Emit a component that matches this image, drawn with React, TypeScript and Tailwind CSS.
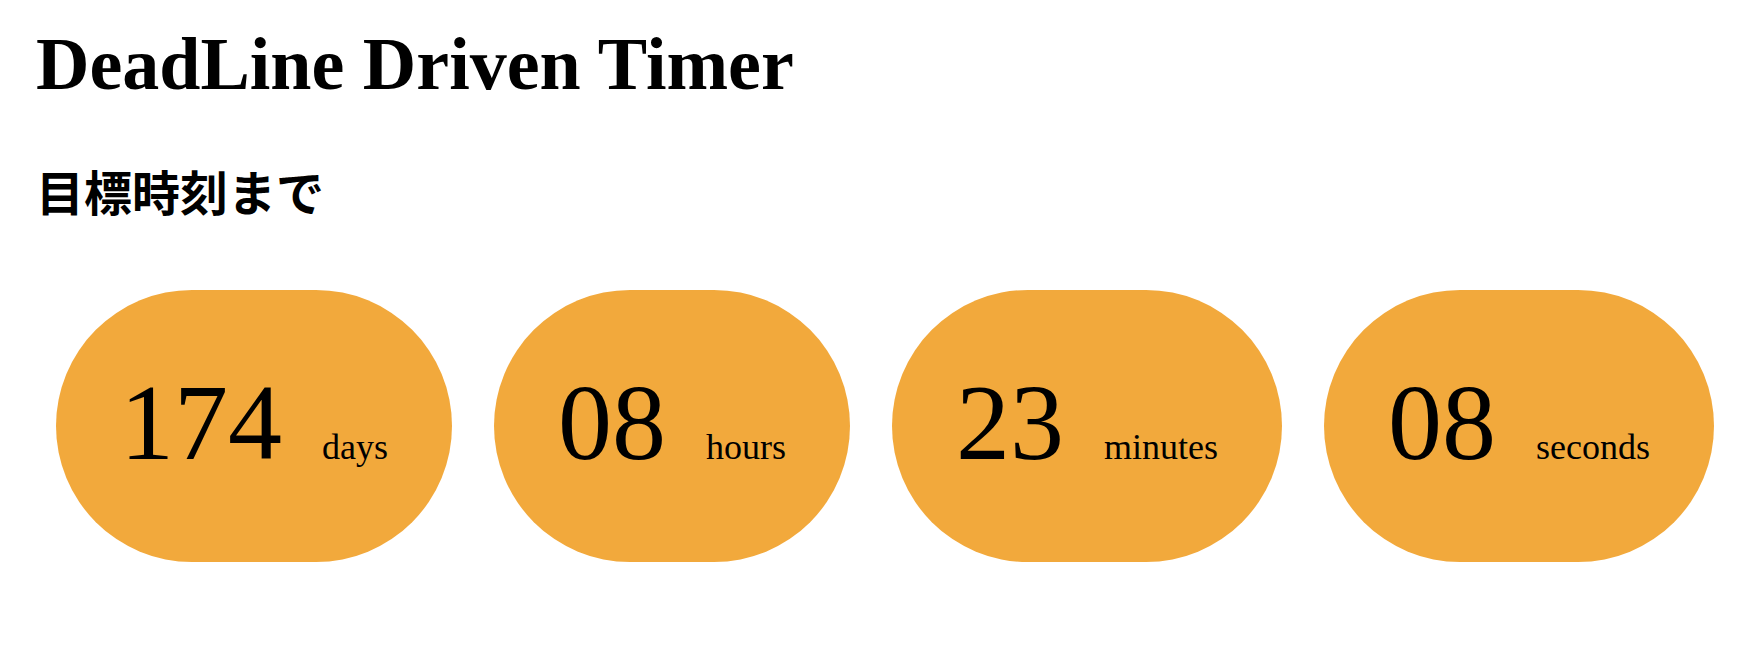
const units = [
  { value: "174", label: "days" },
  { value: "08", label: "hours" },
  { value: "23", label: "minutes" },
  { value: "08", label: "seconds" },
];

function TimeBlock({ value, label }: { value: string; label: string }) {
  return (
    <div className="flex h-[272px] items-center rounded-full bg-[#f2a93c] px-16 pb-[6px]">
      <div className="flex items-baseline gap-[40px]">
        <span className="text-[108px] leading-none">{value}</span>
        <span className="text-[36px] leading-none">{label}</span>
      </div>
    </div>
  );
}

export default function App() {
  return (
    <div className="min-h-screen bg-white px-[36px] pt-[24px] font-['Liberation_Serif',serif] text-black">
      <h1 className="text-[74px] font-bold leading-[80px]">DeadLine Driven Timer</h1>

      <h2 className="mt-[58px] font-['Noto_Sans_CJK_JP',sans-serif] text-[48px] font-bold leading-[56px]">
        目標時刻まで
      </h2>

      {/* countdown */}
      <div className="mt-[72px] flex gap-[42px] pl-[20px]">
        {units.map((u) => (
          <TimeBlock key={u.label} value={u.value} label={u.label} />
        ))}
      </div>
    </div>
  );
}
